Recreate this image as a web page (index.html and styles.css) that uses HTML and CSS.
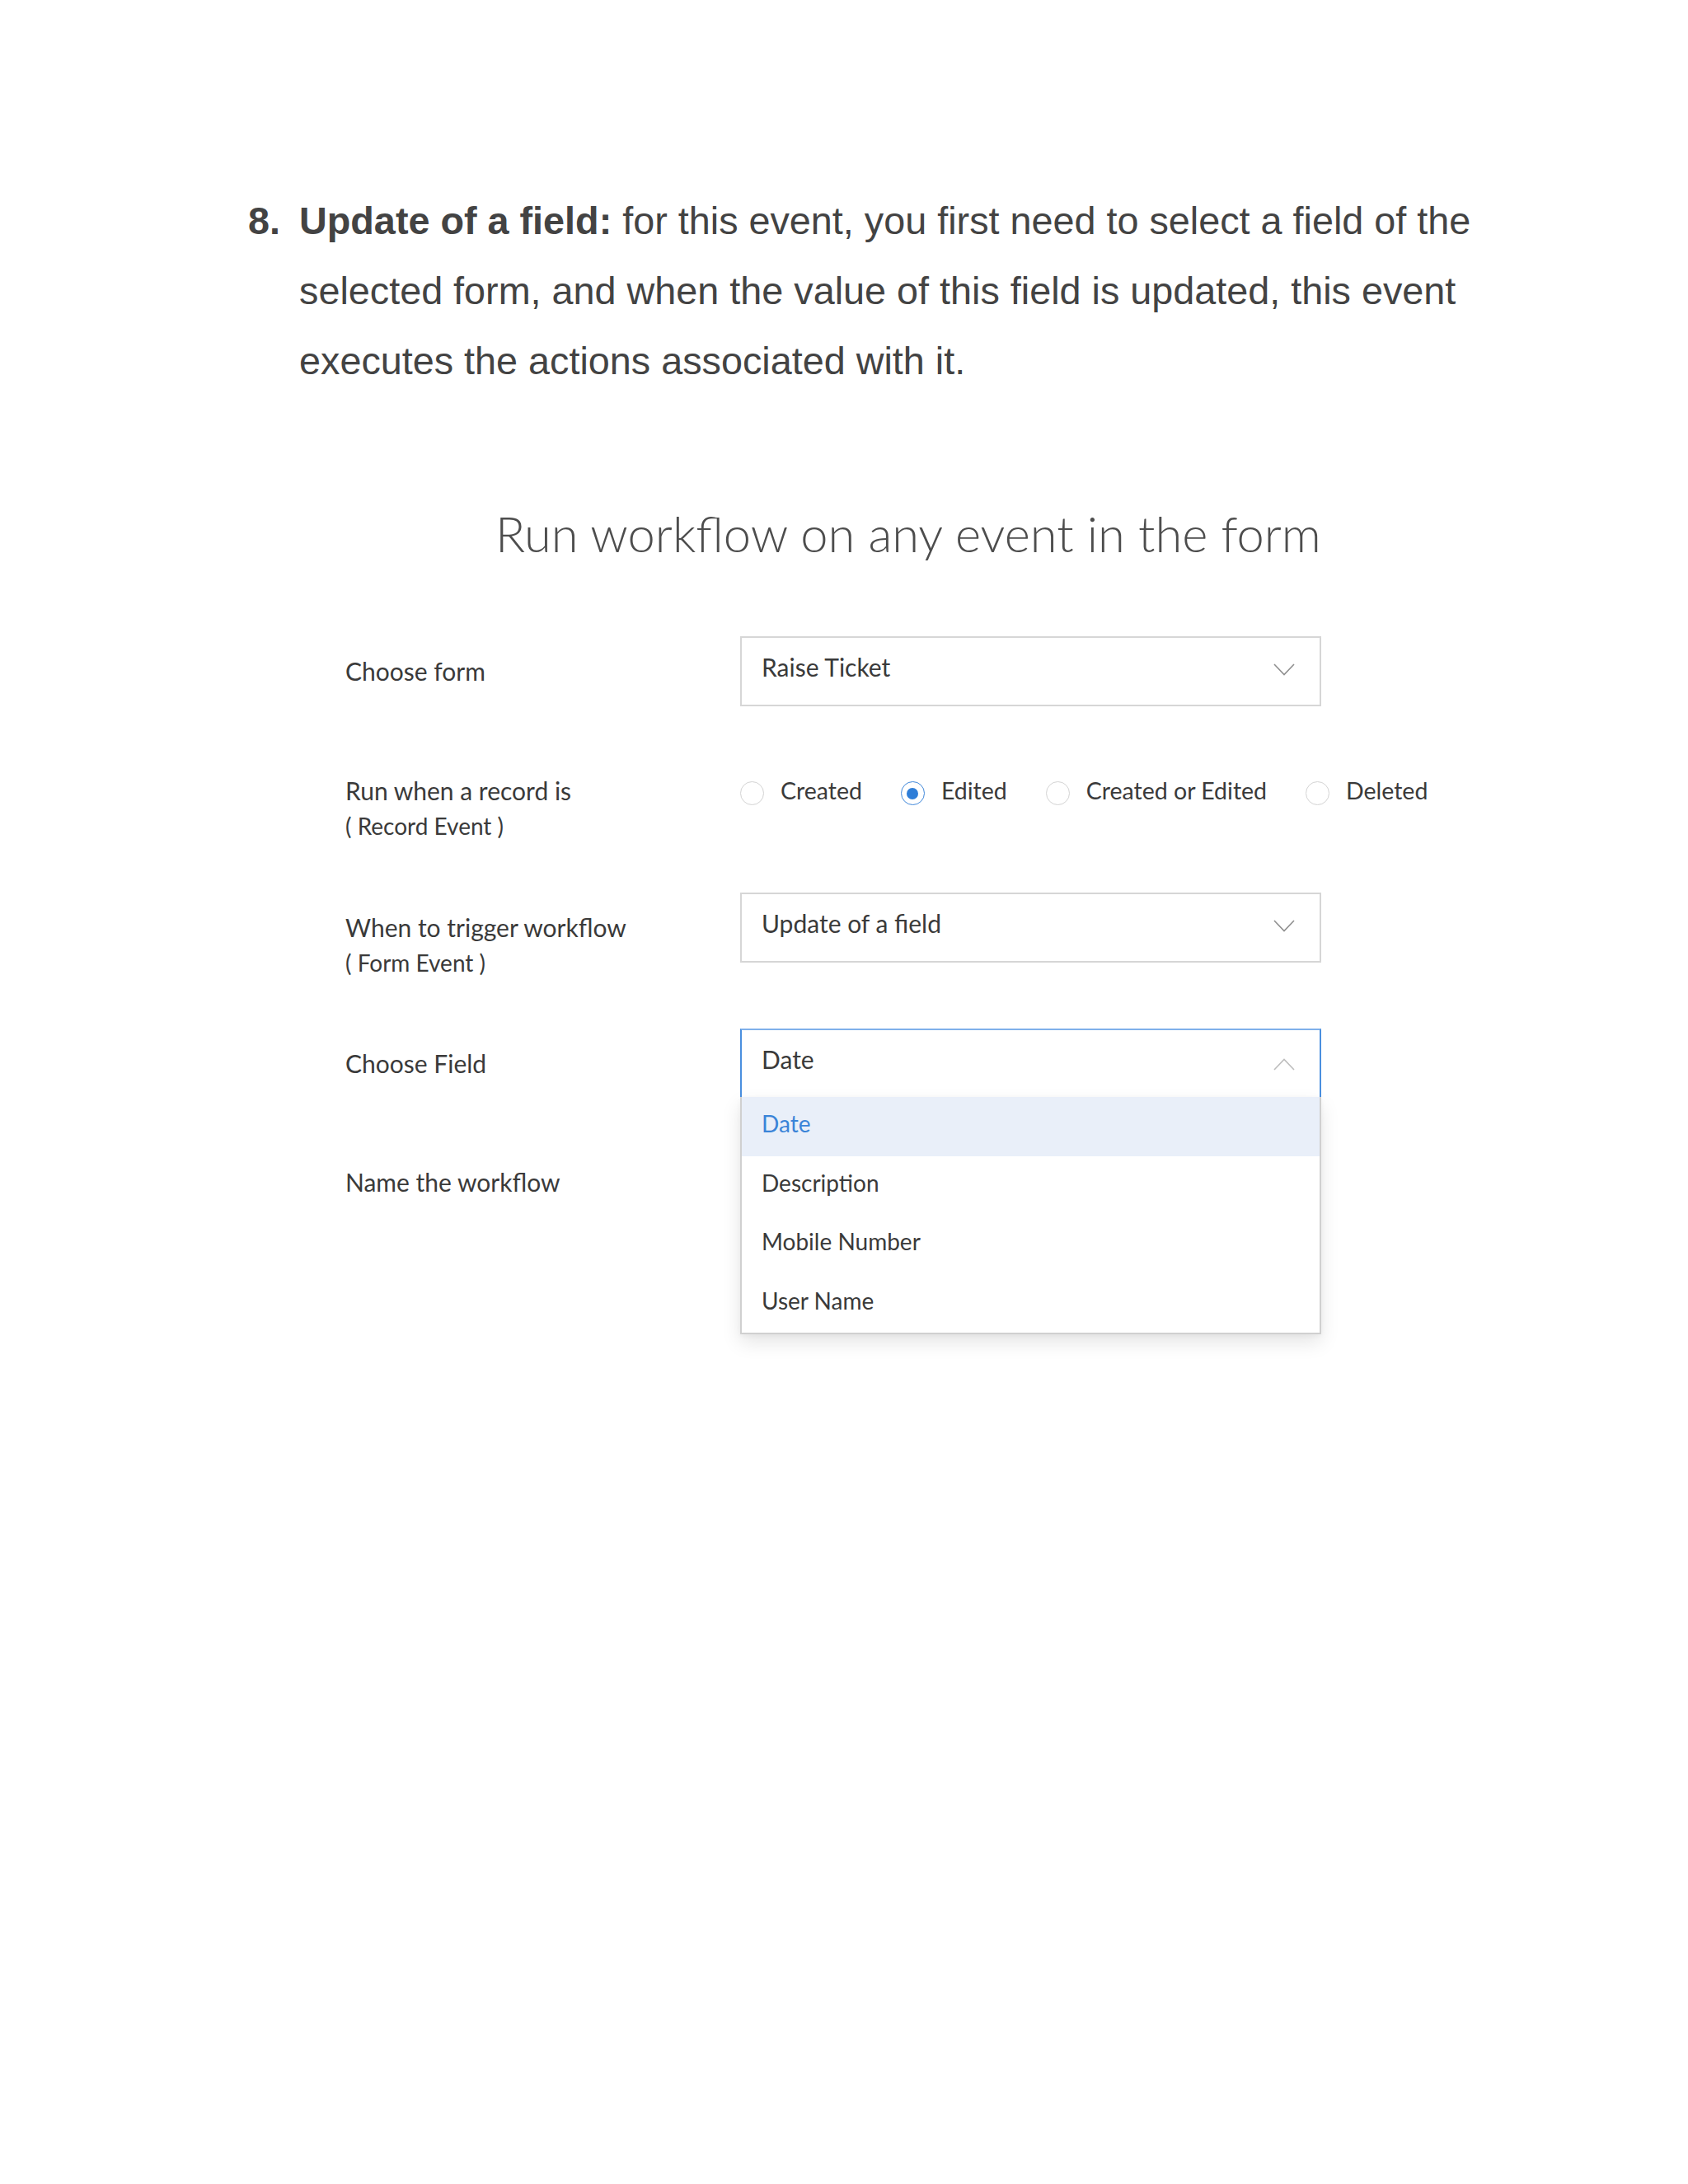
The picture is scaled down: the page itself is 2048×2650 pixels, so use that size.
FILE: index.html
```html
<!DOCTYPE html>
<html lang="en">
<head>
<meta charset="utf-8">
<title>Update of a field</title>
<link rel="stylesheet" href="styles.css">
</head>
<body>
<div class="page">
  <div class="item">
    <span class="num">8.</span>
    <p class="text"><b>Update of a field:</b> for this event, you first need to select a field of the selected form, and when the value of this field is updated, this event executes the actions associated with it.</p>
  </div>

  <div class="form">
    <h1 class="title">Run workflow on any event in the form</h1>

    <div class="row row-form">
      <div class="label">Choose form</div>
      <div class="select">
        <span class="value">Raise Ticket</span>
        <svg class="chev" width="26" height="15" viewBox="0 0 26 15"><polyline points="1,1 13,13.5 25,1" fill="none" stroke="#8f8f8f" stroke-width="1.6"/></svg>
      </div>
    </div>

    <div class="row row-record">
      <div class="label plain">Run when a record is<br><span class="sub">( Record Event )</span></div>
      <div class="radios">
        <div class="radio"><span class="dot"></span><span>Created</span></div>
        <div class="radio"><span class="dot on"></span><span>Edited</span></div>
        <div class="radio"><span class="dot"></span><span>Created or Edited</span></div>
        <div class="radio"><span class="dot"></span><span>Deleted</span></div>
      </div>
    </div>

    <div class="row row-trigger">
      <div class="label">When to trigger workflow<br><span class="sub">( Form Event )</span></div>
      <div class="select">
        <span class="value">Update of a field</span>
        <svg class="chev" width="26" height="15" viewBox="0 0 26 15"><polyline points="1,1 13,13.5 25,1" fill="none" stroke="#8f8f8f" stroke-width="1.6"/></svg>
      </div>
    </div>

    <div class="row row-field">
      <div class="label">Choose Field</div>
      <div class="select open">
        <span class="value">Date</span>
        <svg class="chev up" width="26" height="15" viewBox="0 0 26 15"><polyline points="1,14 13,1.5 25,14" fill="none" stroke="#bdbdbd" stroke-width="1.6"/></svg>
        <ul class="menu">
          <li class="opt active">Date</li>
          <li class="opt">Description</li>
          <li class="opt">Mobile Number</li>
          <li class="opt">User Name</li>
        </ul>
      </div>
    </div>

    <div class="row row-name">
      <div class="label plain">Name the workflow</div>
    </div>
  </div>
</div>
</body>
</html>
```

FILE: styles.css
```css
html, body {
  margin: 0;
  padding: 0;
  background: #ffffff;
}

.page {
  padding-top: 226px;
  min-height: 2650px;
  box-sizing: border-box;
}

/* numbered paragraph */
.item {
  display: flex;
  margin-left: 301px;
  font-family: "Liberation Sans", Arial, sans-serif;
  font-size: 46.75px;
  line-height: 85px;
  color: #434343;
}

.num {
  flex: none;
  width: 62px;
  font-weight: bold;
}

.text {
  margin: 0;
  width: 1480px;
}

.text b {
  font-weight: bold;
}

/* form screenshot */
.form {
  margin-left: 419px;
  width: 1400px;
  font-family: Lato, "Open Sans", sans-serif;
  font-size: 30px;
  line-height: 42px;
  color: #3a3a3a;
}

.title {
  margin: 131px 0 0 182px;
  font-family: Lato, sans-serif;
  font-weight: 300;
  font-size: 59.6px;
  line-height: 70px;
  color: #4d4d4d;
  white-space: nowrap;
}

.row {
  display: flex;
  align-items: flex-start;
}

.row-form { margin-top: 90px; }
.row-record { margin-top: 81px; }
.row-trigger { margin-top: 60px; }
.row-field { margin-top: 59px; }
.row-name { margin-top: 80px; }

.label {
  flex: none;
  width: 479px;
  padding-top: 21px;
}

.label.plain {
  padding-top: 0;
}

.sub {
  font-size: 28px;
}

.select {
  position: relative;
  flex: none;
  width: 705px;
  height: 85px;
  box-sizing: border-box;
  border: 2px solid #d6d6d6;
  padding: 14px 0 0 24px;
  display: flex;
  justify-content: space-between;
  align-items: flex-start;
  background: #fff;
}

.select.open {
  border-color: #4a8fdf;
  border-top-color: #7fb0ea;
}

.chev {
  flex: none;
  margin: 17px 30px 0 0;
}

.chev.up {
  margin-top: 20px;
}

/* radios */
.radios {
  display: flex;
  gap: 47px;
  white-space: nowrap;
  font-size: 28.5px;
}

.radio {
  display: flex;
  align-items: flex-start;
  gap: 20px;
}

.dot {
  flex: none;
  width: 29px;
  height: 29px;
  margin-top: 10px;
  box-sizing: border-box;
  border: 1.5px solid #d3d3d3;
  border-radius: 50%;
  display: flex;
  align-items: center;
  justify-content: center;
}

.dot.on {
  border-color: #3f87da;
}

.dot.on::after {
  content: "";
  width: 14px;
  height: 14px;
  border-radius: 50%;
  background: #2f7ed8;
}

/* dropdown menu */
.menu {
  position: absolute;
  left: -2px;
  top: 81px;
  width: 705px;
  box-sizing: border-box;
  margin: 0;
  padding: 0;
  list-style: none;
  background: #fff;
  border: 2px solid #d0d0d0;
  border-top: none;
  box-shadow: 0 10px 22px rgba(0, 0, 0, 0.10), 0 2px 6px rgba(0, 0, 0, 0.04);
  z-index: 2;
  font-size: 28px;
}

.opt {
  height: 71.5px;
  box-sizing: border-box;
  padding: 11px 24px 0 24px;
  color: #3a3a3a;
}

.opt.active {
  background: #e9eff9;
  color: #3a84d8;
}
```
